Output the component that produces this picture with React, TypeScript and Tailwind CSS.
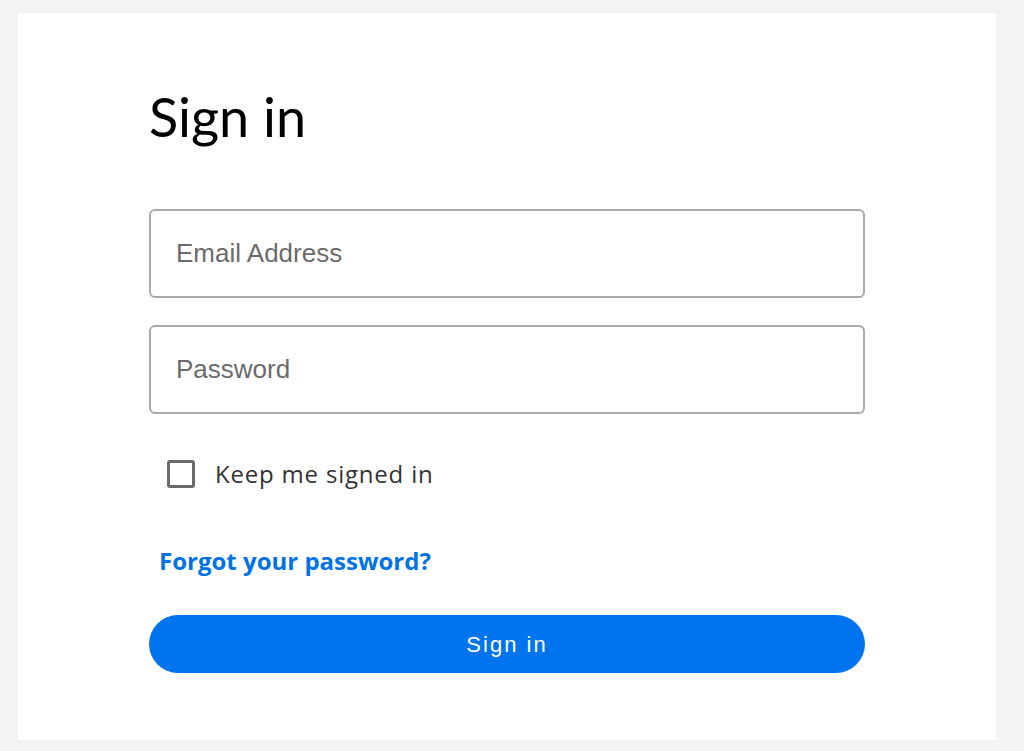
import React from "react";

export default function App() {
  return (
    <div className="min-h-[751px] w-[1024px] bg-[#f3f3f3] pt-[13px] pl-[18px]">
      <div className="w-[978px] h-[727px] bg-white pl-[131px] pt-[77px]">
        <div className="w-[716px] flex flex-col">
          <h1 className="text-[54px] leading-none text-black font-normal" style={{ fontFamily: "Lato, 'Noto Sans', sans-serif" }}>
            Sign in
          </h1>
          <div className="mt-[65px] h-[89px] rounded-[6px] border-2 border-[#aaaaaa] flex items-center pl-[25px]">
            <span className="text-[26px] text-[#6b6b6b]" style={{ fontFamily: "'Liberation Sans', Arial, sans-serif" }}>Email Address</span>
          </div>
          <div className="mt-[27px] h-[89px] rounded-[6px] border-2 border-[#aaaaaa] flex items-center pl-[25px]">
            <span className="text-[26px] text-[#6b6b6b]" style={{ fontFamily: "'Liberation Sans', Arial, sans-serif" }}>Password</span>
          </div>
          <div className="mt-[46px] ml-[18px] h-[28px] flex items-center gap-[20px]">
            <div className="w-[28px] h-[28px] rounded-[3px] border-[3px] border-[#6b6b6b] bg-white" />
            <span className="text-[24px] leading-none tracking-[0.8px] text-[#333333]" style={{ fontFamily: "'Open Sans', 'Noto Sans', sans-serif" }}>Keep me signed in</span>
          </div>
          <div className="mt-[58px] ml-[10px] h-[30px] flex items-center">
            <span className="text-[24px] leading-none font-bold text-[#0073e6]" style={{ fontFamily: "'Open Sans', 'Noto Sans', sans-serif" }}>Forgot your password?</span>
          </div>
          <div className="mt-[39px] h-[58px] rounded-full bg-[#0073ee] flex items-center justify-center">
            <span className="text-[22px] text-white tracking-[2px]" style={{ fontFamily: "'Liberation Sans', Arial, sans-serif" }}>Sign in</span>
          </div>
        </div>
      </div>
    </div>
  );
}
